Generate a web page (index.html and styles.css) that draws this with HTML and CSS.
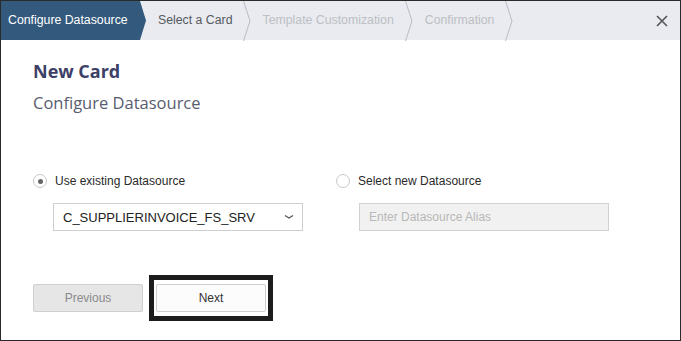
FILE: index.html
```html
<!DOCTYPE html>
<html>
<head>
<meta charset="utf-8">
<link rel="stylesheet" href="styles.css">
</head>
<body>
<div class="dialog">
  <div class="header">
    <div class="step step-active">Configure Datasource</div>
    <div class="step step-next">Select a Card</div>
    <svg class="chev" width="8" height="40" viewBox="0 0 8 40"><polyline points="0.5,0 7,20 0.5,40" fill="none" stroke="#b9bcc2" stroke-width="1"/></svg>
    <div class="step step-off">Template Customization</div>
    <svg class="chev" width="8" height="40" viewBox="0 0 8 40"><polyline points="0.5,0 7,20 0.5,40" fill="none" stroke="#b9bcc2" stroke-width="1"/></svg>
    <div class="step step-off">Confirmation</div>
    <svg class="chev" width="8" height="40" viewBox="0 0 8 40"><polyline points="0.5,0 7,20 0.5,40" fill="none" stroke="#b9bcc2" stroke-width="1"/></svg>
    <div class="spacer"></div>
    <svg class="close" width="12" height="12" viewBox="0 0 12 12"><path d="M1 1 L11 11 M11 1 L1 11" stroke="#555" stroke-width="1.6" fill="none"/></svg>
  </div>
  <div class="content">
    <div class="title">New Card</div>
    <div class="subtitle">Configure Datasource</div>
    <div class="options">
      <div class="col col-left">
        <label class="radio-row"><span class="radio radio-on"></span><span class="radio-label">Use existing Datasource</span></label>
        <div class="select">
          <span class="select-text">C_SUPPLIERINVOICE_FS_SRV</span>
          <svg class="select-arrow" width="10" height="6" viewBox="0 0 10 6"><polyline points="1,1.5 5,4 9,1.5" fill="none" stroke="#555" stroke-width="1.3"/></svg>
        </div>
      </div>
      <div class="col col-right">
        <label class="radio-row"><span class="radio"></span><span class="radio-label">Select new Datasource</span></label>
        <div class="input">Enter Datasource Alias</div>
      </div>
    </div>
    <div class="buttons">
      <div class="btn btn-disabled">Previous</div>
      <div class="focus-ring"><div class="btn btn-primary">Next</div></div>
    </div>
  </div>
</div>
</body>
</html>
```
FILE: styles.css
```css
html, body {
  margin: 0;
  padding: 0;
  background: #ffffff;
}
.dialog {
  width: 681px;
  height: 341px;
  box-sizing: border-box;
  border: 1px solid #2a2a2a;
  background: #ffffff;
  font-family: "Liberation Sans", Arial, sans-serif;
  overflow: hidden;
}
.header {
  height: 39px;
  background: #e9ebf0;
  display: flex;
  align-items: center;
}
.step {
  font-size: 12.3px;
  line-height: 39px;
  white-space: nowrap;
}
.step-active {
  background: #33597d;
  color: #ffffff;
  padding: 0 18px 0 7px;
  width: 120px;
  clip-path: polygon(0 0, 139px 0, 145px 50%, 139px 100%, 0 100%);
}
.step-next {
  color: #555a60;
  margin-left: 12px;
  margin-right: 10px;
}
.step-off {
  color: #bdbfc3;
  margin-left: 12px;
  margin-right: 11px;
}
.chev {
  display: block;
  flex: none;
}
.spacer {
  flex: 1;
}
.close {
  display: block;
  margin-right: 12px;
}
.content {
  padding: 19px 0 0 32px;
}
.title {
  font-family: "Open Sans", sans-serif;
  font-weight: 700;
  font-size: 18px;
  line-height: 24px;
  color: #3d4066;
}
.subtitle {
  font-family: "Open Sans", sans-serif;
  font-size: 16.5px;
  line-height: 24px;
  margin-top: 8px;
  color: #585c70;
}
.options {
  display: grid;
  grid-template-columns: 303px 1fr;
  margin-top: 58px;
}
.radio-row {
  display: flex;
  align-items: center;
  height: 16px;
}
.radio {
  width: 14px;
  height: 14px;
  border: 1px solid #c8c8c8;
  border-radius: 50%;
  box-sizing: border-box;
  background: #fff;
  display: flex;
  align-items: center;
  justify-content: center;
}
.radio-on::after {
  content: "";
  width: 5px;
  height: 5px;
  border-radius: 50%;
  background: #666;
}
.radio-label {
  font-size: 12px;
  color: #2a2a2a;
  margin-left: 8px;
}
.select {
  margin: 14px 0 0 20px;
  width: 250px;
  height: 28px;
  box-sizing: border-box;
  border: 1px solid #cfcfcf;
  background: #fff;
  display: flex;
  align-items: center;
  padding: 0 8px 0 9px;
}
.select-text {
  flex: 1;
  font-size: 13px;
  color: #222;
}
.select-arrow {
  display: block;
}
.input {
  margin: 14px 0 0 23px;
  width: 250px;
  height: 28px;
  box-sizing: border-box;
  border: 1px solid #d2d2d2;
  background: #f1f1f1;
  font-size: 12px;
  color: #b8b8b8;
  line-height: 26px;
  padding-left: 9px;
}
.buttons {
  display: flex;
  align-items: center;
  margin-top: 44px;
}
.btn {
  width: 110px;
  height: 28px;
  box-sizing: border-box;
  border: 1px solid #cfcfcf;
  border-radius: 2px;
  font-size: 12px;
  line-height: 26px;
  text-align: center;
}
.btn-disabled {
  background: #e6e6e6;
  color: #8a8a8a;
}
.focus-ring {
  margin-left: 6px;
  border: 5px solid #1c1c1c;
  padding: 4px 2px 4px 2px;
  background: #fff;
}
.btn-primary {
  background: #fcfcfc;
  color: #333;
}
```
